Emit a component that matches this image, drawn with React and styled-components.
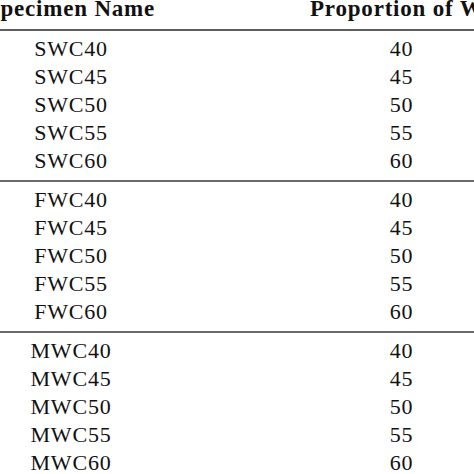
import styled, { createGlobalStyle } from "styled-components";

const GlobalStyle = createGlobalStyle`
    html, body {
        margin: 0;
        padding: 0;
        background: #fff;
        overflow: hidden;
    }
    body {
        width: 474px;
        height: 474px;
        font-family: "Liberation Serif", "Times New Roman", serif;
        color: #111;
    }
`;

const Table = styled.div`
    width: 661px;
    margin-left: -29px;
    font-size: 22px;
    letter-spacing: 0.8px;
`;

const Row = styled.div`
    display: grid;
    grid-template-columns: 200px 1fr;
    height: 28px;
    line-height: 28px;
    white-space: nowrap;
`;

const HeaderRow = styled(Row)`
    margin-top: -5px;
    padding-bottom: 6px;
    height: auto;
    border-bottom: 2px solid #5e5e5e;
    font-size: 23px;
    font-weight: bold;
`;

const Cell = styled.div`
    text-align: ${(props) => (props.left ? "left" : "center")};
    padding-left: ${(props) => (props.left ? "139px" : "0")};
`;

const Group = styled.div`
    padding: 4px 0 5px;
    border-bottom: ${(props) => (props.last ? "none" : "2px solid #6a6a6a")};
`;

const groups = [
    { prefix: "SWC" },
    { prefix: "FWC" },
    { prefix: "MWC" },
];

const ratios = [40, 45, 50, 55, 60];

export default function App() {
    return (
        <>
            <GlobalStyle />
            <Table>
                <HeaderRow>
                    <Cell>Specimen Name</Cell>
                    <Cell left>Proportion of Waste Content (%)</Cell>
                </HeaderRow>
                {groups.map((group, i) => (
                    <Group key={group.prefix} last={i === groups.length - 1}>
                        {ratios.map((ratio) => (
                            <Row key={ratio}>
                                <Cell>
                                    {group.prefix}
                                    {ratio}
                                </Cell>
                                <Cell>{ratio}</Cell>
                            </Row>
                        ))}
                    </Group>
                ))}
            </Table>
        </>
    );
}
